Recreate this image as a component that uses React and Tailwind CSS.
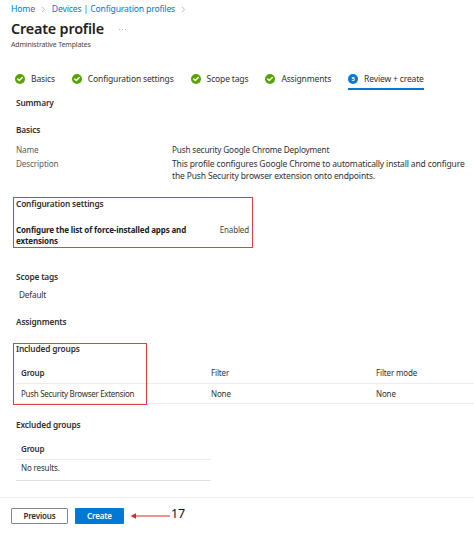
import { ChevronRight } from "lucide-react"

const font = { fontFamily: '"Noto Sans", "Open Sans", sans-serif' }

function DoneIcon() {
  return (
    <svg width="10" height="10" viewBox="0 0 10 10" className="shrink-0">
      <circle cx="5" cy="5" r="5" fill="#57a300" />
      <path d="M2.7 5.1 L4.3 6.6 L7.3 3.5" fill="none" stroke="#fff" strokeWidth="1.4" strokeLinecap="round" strokeLinejoin="round" />
    </svg>
  )
}

function Step({ label, active }) {
  return (
    <div className={"flex items-center gap-[6px] h-[20px] border-b-2 " + (active ? "border-[#0078d4]" : "border-transparent")}>
      {active ? (
        <div className="w-[10px] h-[10px] rounded-full bg-[#0078d4] text-white text-[6px] font-bold flex items-center justify-center shrink-0">5</div>
      ) : (
        <DoneIcon />
      )}
      <span className="text-[8.5px] text-[#323130] whitespace-nowrap">{label}</span>
    </div>
  )
}

function Heading({ children, className = "" }) {
  return <div className={"h-[14px] flex items-center text-[8.3px] font-semibold text-[#323130] " + className}>{children}</div>
}

export default function App() {
  return (
    <div style={font} className="w-[474px] h-[534px] bg-white overflow-hidden text-[#323130] tracking-[-0.15px]">
      {/* header */}
      <div className="pl-[11px]">
        <div className="h-[18px] flex items-center gap-[4px] text-[8.6px] text-[#0078d4]">
          <span>Home</span>
          <ChevronRight size={9} className="text-[#a19f9d]" />
          <span>Devices | Configuration profiles</span>
          <ChevronRight size={9} className="text-[#a19f9d]" />
        </div>
        <div className="h-[22px] flex items-center gap-[15px]">
          <span className="text-[14.4px] font-semibold text-[#201f1e] tracking-[-0.2px] leading-none">Create profile</span>
          <span className="flex gap-[1.5px] mt-[1px]">
            <span className="w-[1.5px] h-[1.5px] rounded-full bg-[#a19f9d]" />
            <span className="w-[1.5px] h-[1.5px] rounded-full bg-[#a19f9d]" />
            <span className="w-[1.5px] h-[1.5px] rounded-full bg-[#a19f9d]" />
          </span>
        </div>
        <div className="h-[10px] flex items-center text-[7px] text-[#484644]">Administrative Templates</div>
      </div>

      {/* steps */}
      <div className="mt-[20px] pl-[15px] flex gap-[17px]">
        <Step label="Basics" />
        <Step label="Configuration settings" />
        <Step label="Scope tags" />
        <Step label="Assignments" />
        <Step label="Review + create" active />
      </div>

      {/* summary */}
      <div className="pl-[16px]">
        <Heading className="mt-[6px]">Summary</Heading>
        <Heading className="mt-[13px]">Basics</Heading>

        <div className="mt-[7px] grid grid-cols-[156px_1fr] text-[8.2px] leading-[12px]">
          <span className="text-[#605e5c]">Name</span>
          <span>Push security Google Chrome Deployment</span>
          <span className="text-[#605e5c] mt-[2px]">Description</span>
          <div className="mt-[2px] text-[8.5px]">
            <div className="whitespace-nowrap">This profile configures Google Chrome to automatically install and configure</div>
            <div>the Push Security browser extension onto endpoints.</div>
          </div>
        </div>
      </div>

      {/* configuration settings (annotated) */}
      <div className="mt-[15px] ml-[13px] w-[240px] h-[51px] border-[1.5px] border-[#d9404a] pl-[2px] pr-[3px]">
        <div className="h-[12px] flex items-center text-[8.3px] font-semibold">Configuration settings</div>
        <div className="mt-[14px] flex justify-between text-[8px] leading-[11px]">
          <div className="font-bold text-[#201f1e] w-[180px]">Configure the list of force-installed apps and extensions</div>
          <span className="text-[#484644]">Enabled</span>
        </div>
      </div>

      <div className="pl-[16px]">
        <Heading className="mt-[22px]">Scope tags</Heading>
        <div className="mt-[5px] h-[12px] pl-[3px] flex items-center text-[8.2px]">Default</div>
        <Heading className="mt-[14px]">Assignments</Heading>

        {/* included groups */}
        <div className="relative mt-[13px]">
          <div className="absolute left-[-3px] top-[1px] w-[134px] h-[62px] border-[1.5px] border-[#d9404a] pointer-events-none" />
          <Heading>Included groups</Heading>
          <div className="mt-[6px] text-[8px]">
            <div className="h-[22px] grid grid-cols-[190px_165px_1fr] items-center border-b border-[#edebe9] font-semibold pl-[5px]">
              <span>Group</span>
              <span className="font-normal">Filter</span>
              <span className="font-normal">Filter mode</span>
            </div>
            <div className="h-[20px] grid grid-cols-[190px_165px_1fr] items-center border-b border-[#edebe9] pl-[5px]">
              <span className="tracking-[-0.3px]">Push Security Browser Extension</span>
              <span>None</span>
              <span>None</span>
            </div>
          </div>
        </div>

        {/* excluded groups */}
        <Heading className="mt-[14px]">Excluded groups</Heading>
        <div className="mt-[6px] w-[195px] text-[8px]">
          <div className="h-[22px] flex items-center border-b border-[#edebe9] pl-[5px] font-semibold">Group</div>
          <div className="h-[21px] pb-[5px] flex items-center border-b border-[#e1dfdd] pl-[5px]">No results.</div>
        </div>
      </div>

      {/* footer */}
      <div className="mt-[16px] border-t border-[#edebe9] pl-[11px] pt-[10px] flex items-center">
        <button className="w-[57px] h-[16px] border border-[#8a8886] rounded-[1px] text-[8px] font-semibold text-[#323130] flex items-center justify-center">
          Previous
        </button>
        <button className="ml-[7px] w-[49px] h-[16px] bg-[#0078d4] rounded-[1px] text-[8px] font-semibold text-white flex items-center justify-center">
          Create
        </button>
        <svg width="40" height="8" viewBox="0 0 40 8" className="ml-[6px]">
          <path d="M0.5 4 L6 1.2 L6 6.8 Z" fill="#d52a2a" />
          <line x1="5" y1="4" x2="40" y2="4" stroke="#d52a2a" strokeWidth="1.2" />
        </svg>
        <span className="ml-[1px] text-[12.5px] text-[#111] leading-none -mt-[4px]">17</span>
      </div>
    </div>
  )
}
